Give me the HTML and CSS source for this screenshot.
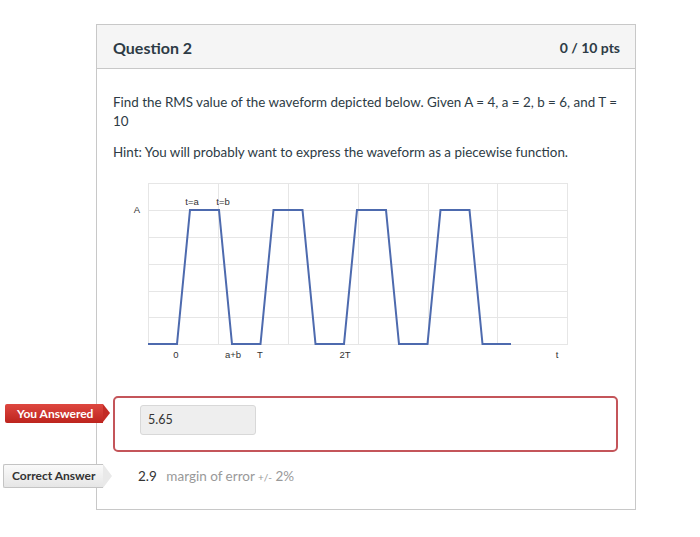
FILE: index.html
```html
<!DOCTYPE html>
<html>
<head>
<meta charset="utf-8">
<link rel="stylesheet" href="styles.css">
</head>
<body>
<div class="card">
  <div class="card-header">
    <span class="q-title">Question 2</span>
    <span class="q-pts">0 / 10 pts</span>
  </div>
  <div class="card-body">
    <p class="q-text">Find the RMS value of the waveform depicted below. Given A = 4, a = 2, b = 6, and T = 10</p>
    <p class="q-text hint">Hint: You will probably want to express the waveform as a piecewise function.</p>
    <svg class="chart" width="450" height="190" viewBox="0 0 450 190">
      <g stroke="#e6e6e6" stroke-width="1" fill="none">
        <line x1="28" y1="3.5" x2="447" y2="3.5"/>
        <line x1="28" y1="30.5" x2="447" y2="30.5"/>
        <line x1="28" y1="57.5" x2="447" y2="57.5"/>
        <line x1="28" y1="84.5" x2="447" y2="84.5"/>
        <line x1="28" y1="111.5" x2="447" y2="111.5"/>
        <line x1="28" y1="137.5" x2="447" y2="137.5"/>
        <line x1="28" y1="164.5" x2="447" y2="164.5"/>
        <line x1="28.5" y1="3" x2="28.5" y2="165"/>
        <line x1="98.5" y1="3" x2="98.5" y2="165"/>
        <line x1="168.5" y1="3" x2="168.5" y2="165"/>
        <line x1="238.5" y1="3" x2="238.5" y2="165"/>
        <line x1="308.5" y1="3" x2="308.5" y2="165"/>
        <line x1="377.5" y1="3" x2="377.5" y2="165"/>
        <line x1="447.5" y1="3" x2="447.5" y2="165"/>
      </g>
      <polyline fill="none" stroke="#4d6aae" stroke-width="2" stroke-linejoin="miter"
        points="28,164 57,164 70,30 99,30 112,164 140.5,164 153.5,30 182.5,30 195.5,164 224,164 237,30 266,30 279,164 307.5,164 320.5,30 349.5,30 362.5,164 391,164"/>
      <g class="chart-label" fill="#333" font-size="9.5" text-anchor="middle">
        <text x="17" y="33">A</text>
        <text x="72" y="25">t=a</text>
        <text x="103" y="25">t=b</text>
        <text x="56" y="178">0</text>
        <text x="113" y="178">a+b</text>
        <text x="140" y="178">T</text>
        <text x="225" y="178">2T</text>
        <text x="437" y="178">t</text>
      </g>
    </svg>

    <div class="answer-row you">
      <span class="badge badge-red">You Answered</span>
      <div class="answer-box">
        <div class="answer-input">5.65</div>
      </div>
    </div>

    <div class="answer-row correct">
      <span class="badge badge-grey">Correct Answer</span>
      <div class="correct-text">
        <span class="correct-val">2.9</span>
        <span class="margin">margin of error <span class="small">+/-</span> 2%</span>
      </div>
    </div>
  </div>
</div>
</body>
</html>
```

FILE: styles.css
```css
* { box-sizing: border-box; }
html, body {
  margin: 0;
  padding: 0;
  background: #fff;
  font-family: Lato, "Open Sans", sans-serif;
  color: #2d3b45;
}
.card {
  margin: 24px 0 0 96px;
  width: 540px;
  height: 486px;
  border: 1px solid #c8c8c8;
}
.card-header {
  height: 44px;
  background: #f5f5f5;
  border-bottom: 1px solid #c8c8c8;
  display: flex;
  justify-content: space-between;
  align-items: center;
  padding: 1px 15px 0 16px;
}
.q-title {
  font-size: 16px;
  font-weight: bold;
  color: #2d3b45;
}
.q-pts {
  font-size: 14px;
  font-weight: bold;
  color: #2d3b45;
}
.card-body {
  padding: 24px 12px 0 16px;
}
.q-text {
  margin: 0;
  font-size: 13.4px;
  line-height: 19px;
  color: #2d3b45;
}
.hint {
  margin-top: 12px;
}
.chart {
  display: block;
  margin: 18px 0 0 7px;
}
.chart-label {
  font-family: "Liberation Sans", Arial, sans-serif;
}
.answer-row {
  position: relative;
}
.you {
  margin-top: 26px;
}
.answer-box {
  width: 505px;
  height: 56px;
  border: 2px solid #c4555a;
  border-radius: 5px;
  padding: 7px 0 0 25px;
}
.answer-input {
  width: 116px;
  height: 30px;
  background: #eeeeee;
  border: 1px solid #d8d8d8;
  border-radius: 3px;
  font-size: 12.5px;
  color: #333;
  padding: 0 7px;
  line-height: 28px;
}
.badge {
  position: absolute;
  left: -108px;
  height: 19px;
  width: 98px;
  font-size: 12px;
  font-weight: bold;
  line-height: 19px;
  padding-left: 12px;
  white-space: nowrap;
}
.badge::after {
  content: "";
  position: absolute;
  right: -7px;
  top: 0;
  width: 0;
  height: 0;
  border-top: 9.5px solid transparent;
  border-bottom: 9.5px solid transparent;
  border-left: 7px solid #c32b25;
}
.badge-red {
  top: 8px;
  color: #fff;
  background: linear-gradient(#de4740, #bd241e);
  border-radius: 2px 0 0 2px;
}
.badge-grey {
  top: 0;
  left: -110px;
  width: 100px;
  height: 24px;
  line-height: 22px;
  padding-left: 8px;
  color: #333;
  background: linear-gradient(#fafafa, #e6e6e6);
  border: 1px solid #c4c4c4;
  border-right: none;
  border-radius: 2px 0 0 2px;
}
.badge-grey::after {
  right: -9px;
  top: -1px;
  border-top: 12px solid transparent;
  border-bottom: 12px solid transparent;
  border-left: 9px solid #e9e9e9;
}
.correct {
  margin-top: 12px;
  height: 24px;
}
.correct-text {
  padding-left: 25px;
  line-height: 24px;
  font-size: 13.5px;
}
.correct-val {
  color: #333;
  margin-right: 6px;
}
.margin {
  color: #999;
}
.small {
  font-size: 10px;
}
```
